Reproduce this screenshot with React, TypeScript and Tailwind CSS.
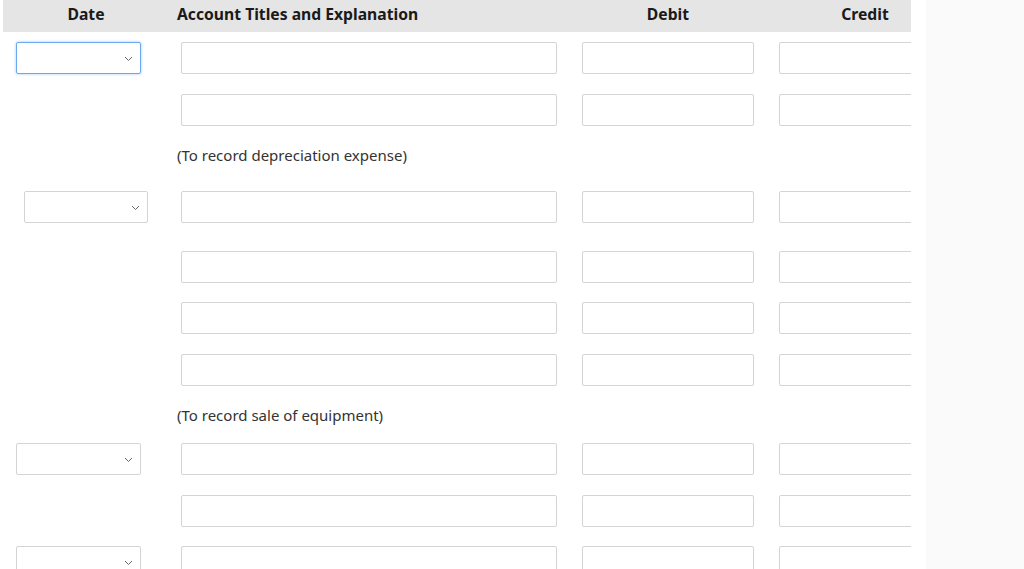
import React from "react";

const Chevron = () => (
  <svg width="9" height="6" viewBox="0 0 9 6" className="absolute right-[7px] top-[13px]">
    <path d="M1 1 L4.5 4.5 L8 1" fill="none" stroke="#666" strokeWidth="1" />
  </svg>
);

function DateSelect({ left, focused }: { left: number; focused?: boolean }) {
  return (
    <div className="w-[178px] shrink-0 relative h-8">
      <div
        className={
          left === 13
            ? "absolute left-[13px] top-0 w-[125px] h-8 bg-white rounded-[2px] border " +
              (focused ? "border-[#6aa8f0] shadow-[0_0_3px_rgba(100,160,240,0.6)]" : "border-[#d4d4d4]")
            : "absolute left-[21px] top-0 w-[124px] h-8 bg-white rounded-[2px] border border-[#d4d4d4]"
        }
      >
        <Chevron />
      </div>
    </div>
  );
}

function Row({ mt, date, focused }: { mt: string; date?: number; focused?: boolean }) {
  return (
    <div className={"flex h-8 " + mt}>
      {date ? <DateSelect left={date} focused={focused} /> : <div className="w-[178px] shrink-0" />}
      <div className="w-[376px] h-8 shrink-0 bg-white border border-[#d4d4d4] rounded-[2px]" />
      <div className="w-[25px] shrink-0" />
      <div className="w-[172px] h-8 shrink-0 bg-white border border-[#d4d4d4] rounded-[2px]" />
      <div className="w-[25px] shrink-0" />
      <div className="w-[160px] h-8 shrink-0 bg-white border border-[#d4d4d4] rounded-[2px]" />
    </div>
  );
}

function Note({ mt, text }: { mt: string; text: string }) {
  return (
    <div className={"flex h-[20px] items-center " + mt}>
      <div className="w-[174px] shrink-0" />
      <div className="text-[15px] text-[#333] leading-[20px]">{text}</div>
    </div>
  );
}

export default function App() {
  return (
    <div
      className="flex w-[1024px] h-[569px] overflow-hidden bg-white"
      style={{ fontFamily: '"Noto Sans", "Open Sans", sans-serif' }}
    >
      <div className="w-[926px] shrink-0 bg-white">
        <div className="ml-[3px] w-[908px] overflow-hidden">
          <div className="flex h-8 items-center pb-[4px] bg-[#e5e5e5] text-[15.7px] font-bold text-[#1a1a1a] leading-[20px]">
            <div className="w-[166px] shrink-0 text-center">Date</div>
            <div className="w-[408px] shrink-0 pl-[8px]">Account Titles and Explanation</div>
            <div className="w-[182px] shrink-0 text-center">Debit</div>
            <div className="w-[212px] shrink-0 text-center">Credit</div>
          </div>
          <Row mt="mt-[10px]" date={13} focused />
          <Row mt="mt-[20px]" />
          <Note mt="mt-[19px]" text="(To record depreciation expense)" />
          <Row mt="mt-[26px]" date={21} />
          <Row mt="mt-[28px]" />
          <Row mt="mt-[19px]" />
          <Row mt="mt-[20px]" />
          <Note mt="mt-[19px]" text="(To record sale of equipment)" />
          <Row mt="mt-[18px]" date={13} />
          <Row mt="mt-[20px]" />
          <Row mt="mt-[19px]" date={13} />
        </div>
      </div>
      <div className="flex-1 bg-[#fafafa]" />
    </div>
  );
}
